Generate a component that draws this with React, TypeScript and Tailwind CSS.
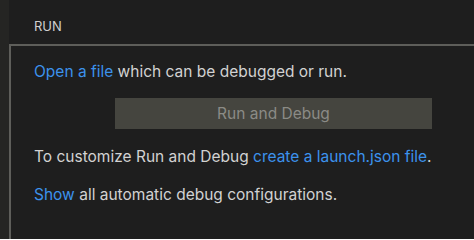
import React from "react";

const Link = ({ children }: { children: React.ReactNode }) => (
  <span className="text-[#3c92ec]">{children}</span>
);

const App = () => {
  return (
    <div
      className="flex w-[474px] h-[239px] bg-[#1e1e1e] text-[#d2d2d2] overflow-hidden"
      style={{ fontFamily: 'Inter, "Liberation Sans", Arial, sans-serif' }}
    >
      <div className="w-[9px] h-full bg-[#252523]" />
      <div className="flex-1 flex flex-col">
        <div className="h-[44px] pl-[25px] pt-[17px] text-[13px] text-[#d0d0d0]">RUN</div>
        <div className="flex-1 border-t-2 border-l-2 border-[#5e5e5a] pl-[23px] pt-[16px] text-[15.5px]">
          <div className="leading-[20px]">
            <Link>Open a file</Link> which can be debugged or run.
          </div>
          <div className="mt-[16px] ml-[81px] w-[317px] h-[31px] bg-[#45453f] flex items-center justify-center text-[#8b8b86]">
            Run and Debug
          </div>
          <div className="mt-[18px] leading-[20px]">
            To customize Run and Debug <Link>create a launch.json file</Link>.
          </div>
          <div className="mt-[18px] leading-[20px]">
            <Link>Show</Link> all automatic debug configurations.
          </div>
        </div>
      </div>
    </div>
  );
};

export default App;
